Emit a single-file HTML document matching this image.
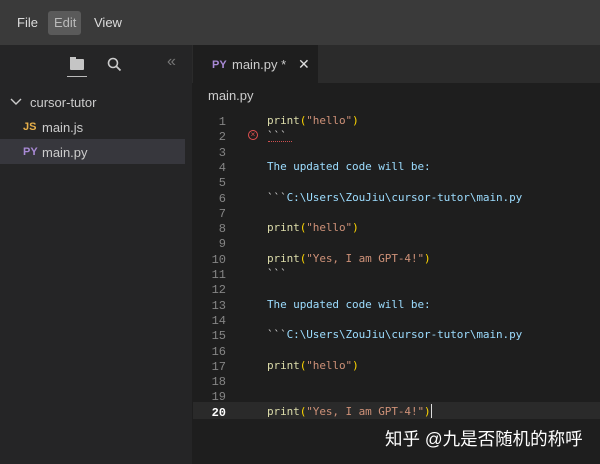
<!DOCTYPE html>
<html><head><meta charset="utf-8"><style>
*{margin:0;padding:0;box-sizing:border-box}
body{width:600px;height:464px;background:#1e1e1e;font-family:"Liberation Sans",sans-serif;overflow:hidden;position:relative;color:#ccc}
.menu{position:absolute;left:0;top:0;width:600px;height:45px;background:#3a3a3a}
.menu span{position:absolute;top:15px;font-size:13px;color:#ddd}
.side{position:absolute;left:0;top:45px;width:192px;height:419px;background:#252526}
.tabbar{position:absolute;left:192px;top:45px;width:408px;height:38px;background:#2b2b2b}
.tab{position:absolute;left:1px;top:0;width:125px;height:38px;background:#1e1e1e}
.ln{position:absolute;left:193px;width:33px;text-align:right;font:12px "Liberation Mono",monospace;color:#858585}
.cd{position:absolute;left:267px;font:11px "DejaVu Sans Mono",monospace;color:#ddd;white-space:pre;letter-spacing:-0.08px;line-height:14px}
.f{color:#dcdcaa}.s{color:#ce9178}.p{color:#ffd700}.b{color:#9cdcfe}
</style></head><body>
<div class="menu">
<span style="left:17px">File</span>
<div style="position:absolute;left:48px;top:11px;width:33px;height:24px;background:#5a5a5a;border-radius:3px"></div>
<span style="left:54px;color:#bbb">Edit</span>
<span style="left:94px">View</span>
</div>
<div class="side">
<div style="position:absolute;left:70px;top:14px;width:14px;height:11px;background:#c5c5c5;border-radius:1px"></div>
<div style="position:absolute;left:70px;top:12px;width:6px;height:3px;background:#c5c5c5"></div>
<div style="position:absolute;left:67px;top:31px;width:20px;height:1px;background:#bbb"></div>
<svg style="position:absolute;left:107px;top:12px" width="15" height="15" viewBox="0 0 15 15"><circle cx="6" cy="6" r="4.5" fill="none" stroke="#ccc" stroke-width="1.6"/><path d="M9.5 9.5L13.5 13.5" stroke="#ccc" stroke-width="1.8"/></svg>
<div style="position:absolute;left:167px;top:8px;font-size:16px;color:#777">«</div>
<svg style="position:absolute;left:10px;top:52px" width="12" height="10"><path d="M1 2L6 7L11 2" fill="none" stroke="#ccc" stroke-width="1.4"/></svg>
<div style="position:absolute;left:30px;top:50px;font-size:13px;color:#ccc">cursor-tutor</div>
<div style="position:absolute;left:23px;top:76px;font-size:11px;font-weight:bold;color:#e8b04a">JS</div>
<div style="position:absolute;left:42px;top:75px;font-size:13px;color:#ccc">main.js</div>
<div style="position:absolute;left:0;top:94px;width:185px;height:25px;background:#37373d"></div>
<div style="position:absolute;left:23px;top:101px;font-size:11px;font-weight:bold;color:#a98ad6">PY</div>
<div style="position:absolute;left:42px;top:100px;font-size:13px;color:#ccc">main.py</div>
</div>
<div class="tabbar"><div class="tab">
<div style="position:absolute;left:19px;top:14px;font-size:11px;font-weight:bold;color:#a98ad6">PY</div>
<div style="position:absolute;left:39px;top:12px;font-size:13px;color:#ccc">main.py *</div>
<div style="position:absolute;left:105px;top:11px;font-size:14px;color:#ddd">✕</div>
</div></div>
<div style="position:absolute;left:208px;top:88px;font-size:13px;color:#ccc">main.py</div>
<div style="position:absolute;left:193px;top:402px;width:407px;height:17px;background:#2a2a2a"></div>
<div style="position:absolute;left:248px;top:130px;width:10px;height:10px;border:1px solid #e05050;border-radius:50%;color:#e05050;font-size:8px;line-height:8px;text-align:center">×</div>
<div style="position:absolute;left:268px;top:140px;width:24px;height:2px;border-bottom:1px dotted #d05050"></div>

<div class=ln style="top:115px">1</div><div class=cd style="top:114px"><span class=f>print</span><span class=p>(</span><span class=s>"hello"</span><span class=p>)</span></div>
<div class=ln style="top:130.3px">2</div><div class=cd style="top:129.3px">&#96;&#96;&#96;</div>
<div class=ln style="top:145.6px">3</div>
<div class=ln style="top:160.9px">4</div><div class=cd style="top:159.9px"><span class=b>The updated code will be:</span></div>
<div class=ln style="top:176.2px">5</div>
<div class=ln style="top:191.5px">6</div><div class=cd style="top:190.5px">&#96;&#96;&#96;<span class=b>C:\Users\ZouJiu\cursor-tutor\main.py</span></div>
<div class=ln style="top:206.8px">7</div>
<div class=ln style="top:222.1px">8</div><div class=cd style="top:221.1px"><span class=f>print</span><span class=p>(</span><span class=s>"hello"</span><span class=p>)</span></div>
<div class=ln style="top:237.4px">9</div>
<div class=ln style="top:252.7px">10</div><div class=cd style="top:251.7px"><span class=f>print</span><span class=p>(</span><span class=s>"Yes, I am GPT-4!"</span><span class=p>)</span></div>
<div class=ln style="top:268px">11</div><div class=cd style="top:267px">&#96;&#96;&#96;</div>
<div class=ln style="top:283.3px">12</div>
<div class=ln style="top:298.6px">13</div><div class=cd style="top:297.6px"><span class=b>The updated code will be:</span></div>
<div class=ln style="top:313.9px">14</div>
<div class=ln style="top:329.2px">15</div><div class=cd style="top:328.2px">&#96;&#96;&#96;<span class=b>C:\Users\ZouJiu\cursor-tutor\main.py</span></div>
<div class=ln style="top:344.5px">16</div>
<div class=ln style="top:359.8px">17</div><div class=cd style="top:358.8px"><span class=f>print</span><span class=p>(</span><span class=s>"hello"</span><span class=p>)</span></div>
<div class=ln style="top:375.1px">18</div>
<div class=ln style="top:390.4px">19</div>
<div class=ln style="top:405.7px;color:#fff;font-weight:bold">20</div><div class=cd style="top:404.7px"><span class=f>print</span><span class=p>(</span><span class=s>"Yes, I am GPT-4!"</span><span class=p>)</span></div>

<div style="position:absolute;left:431px;top:404px;width:1px;height:14px;background:#ddd"></div>
<div style="position:absolute;left:385px;top:426px;font-size:17.5px;color:#fff;font-family:'Liberation Sans','Noto Sans CJK SC',sans-serif">知乎 @九是否随机的称呼</div>
</body></html>
